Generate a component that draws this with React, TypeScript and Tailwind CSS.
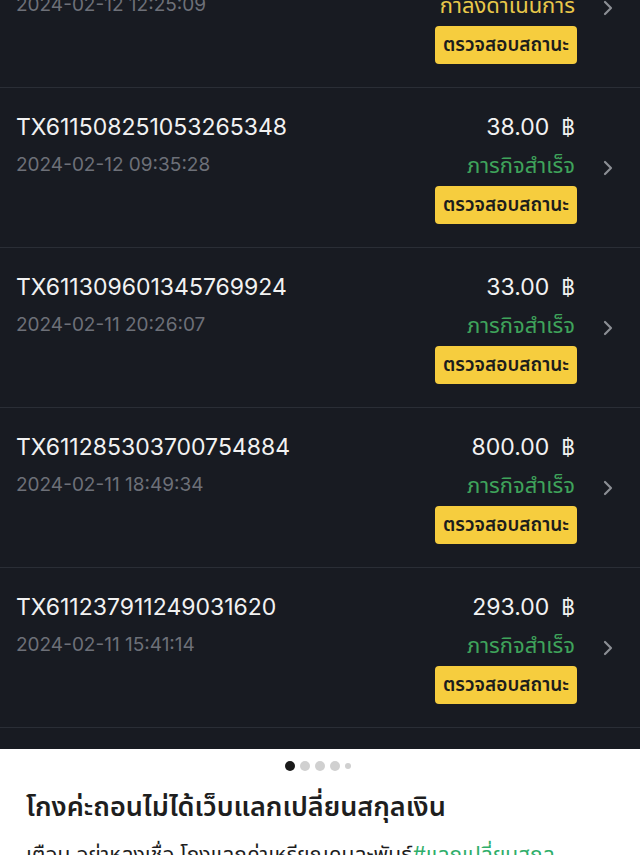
import React from "react";

type Row = { id?: string; amount?: string; date: string; status: "pending" | "done" };

const rows: Row[] = [
  { date: "2024-02-12 12:25:09", status: "pending" },
  { id: "TX611508251053265348", amount: "38.00", date: "2024-02-12 09:35:28", status: "done" },
  { id: "TX611309601345769924", amount: "33.00", date: "2024-02-11 20:26:07", status: "done" },
  { id: "TX611285303700754884", amount: "800.00", date: "2024-02-11 18:49:34", status: "done" },
  { id: "TX611237911249031620", amount: "293.00", date: "2024-02-11 15:41:14", status: "done" },
];

const font = { fontFamily: '"Inter", "Noto Sans Thai", "Noto Sans", "Liberation Sans", sans-serif' };

function Chevron() {
  return (
    <svg width="12" height="16" viewBox="0 0 12 16" fill="none">
      <path d="M3 2 L9 8 L3 14" stroke="#8b8e94" strokeWidth="2.2" strokeLinecap="round" strokeLinejoin="round" />
    </svg>
  );
}

function TxRow({ r }: { r: Row }) {
  return (
    <div className="h-[160px] border-b border-[#2a2e36] flex items-center pl-4 pr-[26px]">
      <div className="flex-1 flex self-start pt-[25px]">
        <div className="flex-1 flex flex-col">
          <div className="text-[23px] leading-[28px] text-[#f2f2f2] h-[28px]">{r.id ?? ""}</div>
          <div className="mt-[12px] text-[19px] leading-[24px] text-[#6d7078]">{r.date}</div>
        </div>
        <div className="flex flex-col items-end">
          <div className="text-[23px] leading-[28px] text-[#f2f2f2] h-[28px]">
            {r.amount ? (
              <>
                {r.amount}
                <span className="ml-[12px] text-[21px]">฿</span>
              </>
            ) : null}
          </div>
          <div
            className={
              "mt-[10px] text-[22px] leading-[28px] " +
              (r.status === "done" ? "text-[#3fa45b]" : "text-[#e8c84a]")
            }
          >
            {r.status === "done" ? "ภารกิจสำเร็จ" : "กำลังดำเนินการ"}
          </div>
          <div className="mt-[7px] h-[38px] w-[142px] -mr-[2px] rounded-[4px] bg-[#f6cd3e] flex items-center justify-center text-[19px] font-semibold text-[#1c1c1c]">
            ตรวจสอบสถานะ
          </div>
        </div>
      </div>
      <div className="ml-[27px] flex items-center">
        <Chevron />
      </div>
    </div>
  );
}

export default function App() {
  return (
    <div className="w-[640px] h-[855px] overflow-hidden bg-white" style={font}>
      <div className="bg-[#181b22] -mt-[72px]">
        {rows.map((r, i) => (
          <TxRow key={i} r={r} />
        ))}
        <div className="h-[21px]" />
      </div>
      <div className="bg-white">
        <div className="flex justify-center items-center gap-[5px] pt-[12px] pr-[4px]">
          <span className="w-[10px] h-[10px] rounded-full bg-[#1a1a1a]" />
          <span className="w-[10px] h-[10px] rounded-full bg-[#d0d0d0]" />
          <span className="w-[10px] h-[10px] rounded-full bg-[#d0d0d0]" />
          <span className="w-[10px] h-[10px] rounded-full bg-[#d0d0d0]" />
          <span className="w-[6px] h-[6px] rounded-full bg-[#d0d0d0]" />
        </div>
        <div className="px-[26px] mt-[20px] text-[27px] leading-[32px] font-semibold text-[#1e1e1e] whitespace-nowrap">
          โกงค่ะถอนไม่ได้เว็บแลกเปลี่ยนสกุลเงิน
        </div>
        <div className="px-[26px] mt-[18px] text-[21px] leading-[28px] text-[#1e1e1e] whitespace-nowrap">
          เตือน อย่าหลงเชื่อ โกงแลกค่าเหรียญคนละพันธ์<span className="text-[#2fae6a]">#แลกเปลี่ยนสกุล</span>
        </div>
      </div>
    </div>
  );
}
